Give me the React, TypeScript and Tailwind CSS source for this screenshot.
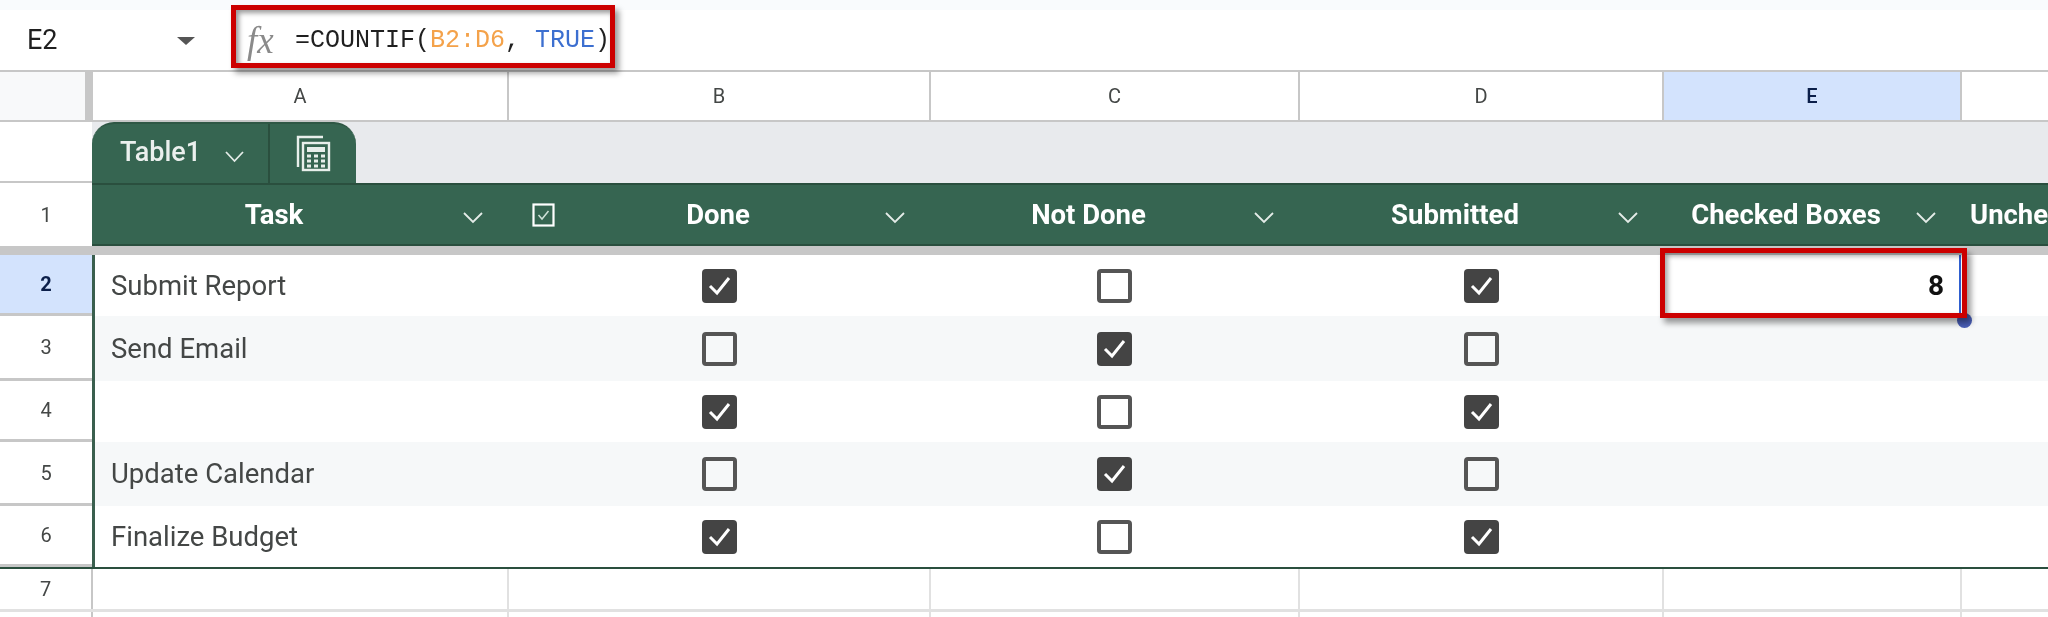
const widths = ["w-[416px]", "w-[422px]", "w-[369px]", "w-[364px]", "w-[298px]", "w-[87px]"];

function Chevron() {
  return (
    <svg width="22" height="13" viewBox="0 0 22 13" className="ml-[6px] mr-[24px] shrink-0 mt-[5px]" fill="none" stroke="#e4ece8" strokeWidth="1.8">
      <path d="M2 2 L11 11 L20 2" />
    </svg>
  );
}

function Checkbox({ on }: { on: boolean }) {
  return on ? (
    <div className="w-[35px] h-[34px] rounded-[4px] bg-[#444444] flex items-center justify-center">
      <svg width="27" height="24" viewBox="0 0 27 24" fill="none" stroke="#ffffff" strokeWidth="3">
        <path d="M4 12 L11 19 L23 4" />
      </svg>
    </div>
  ) : (
    <div className="w-[35px] h-[34px] rounded-[4px] border-[4px] border-[#555555]" />
  );
}

function HeaderCell({ label, width, pad, check }: { label: string; width: string; pad?: string; check?: boolean }) {
  return (
    <div className={`${width} shrink-0 h-full flex items-center relative overflow-hidden`}>
      {check && (
        <svg width="23" height="24" viewBox="0 0 23 24" className="absolute left-[24px] top-[18px]" fill="none" stroke="#ffffff">
          <rect x="1.5" y="1.5" width="20" height="21" strokeWidth="2.2" />
          <path d="M6.5 12 L10 16 L16.5 8" strokeWidth="1.5" stroke="#cfe0d8" />
        </svg>
      )}
      <span className={`${pad ?? ""} flex-1 text-center text-white font-bold text-[27.5px] leading-none whitespace-nowrap`}>{label}</span>
      <Chevron />
    </div>
  );
}

function ColHeader({ label, width, active }: { label: string; width: string; active?: boolean }) {
  return (
    <div className={`${width} shrink-0 h-full flex items-center justify-center border-r-2 border-[#c7c7c7] text-[20px] ${active ? "bg-[#d3e3fd] text-[#0b1f4a] font-medium" : "text-[#444746]"}`}>
      {label}
    </div>
  );
}

const rows = [
  { n: 2, task: "Submit Report", h: "h-[61px]", b: [true, false, true], stripe: false },
  { n: 3, task: "Send Email", h: "h-[65px]", b: [false, true, false], stripe: true },
  { n: 4, task: "", h: "h-[61px]", b: [true, false, true], stripe: false },
  { n: 5, task: "Update Calendar", h: "h-[64px]", b: [false, true, false], stripe: true },
  { n: 6, task: "Finalize Budget", h: "h-[61px]", b: [true, false, true], stripe: false },
];

export default function App() {
  return (
    <div className="relative w-[2048px] h-[617px] overflow-hidden bg-white font-['Roboto',sans-serif] text-[#444746] blur-[0.5px]">
      <div className="h-[10px] bg-[#f9fbfd]" />

      {/* Formula bar */}
      <div className="h-[62px] flex items-center border-b-2 border-[#c7c7c7]">
        <span className="w-[150px] pl-[27px] text-[27px] text-[#1f1f1f] leading-none">E2</span>
        <svg width="18" height="8" viewBox="0 0 18 8" className="ml-[27px] mt-[2px]">
          <path d="M0 0 H18 L9 8 Z" fill="#555555" />
        </svg>
        <span className="ml-[52px] w-[48px] font-['Liberation_Serif',serif] italic text-[37px] leading-none text-[#8a8a8a]">fx</span>
        <span className="font-['Liberation_Mono',monospace] text-[25px] leading-none text-[#1f1f1f]">
          =COUNTIF(<span className="text-[#f4a24a]">B2:D6</span>, <span className="text-[#3c6fd0]">TRUE</span>)
        </span>
      </div>

      {/* Column letters */}
      <div className="h-[50px] flex border-b-2 border-[#c7c7c7]">
        <div className="w-[85px] shrink-0 bg-[#f8f9fa]" />
        <div className="w-[8px] shrink-0 bg-[#c7c7c7]" />
        <ColHeader label="A" width={widths[0]} />
        <ColHeader label="B" width={widths[1]} />
        <ColHeader label="C" width={widths[2]} />
        <ColHeader label="D" width={widths[3]} />
        <ColHeader label="E" width={widths[4]} active />
        <div className="flex-1" />
      </div>

      {/* Table tab band */}
      <div className="h-[61px] flex">
        <div className="w-[92px] shrink-0 border-b-2 border-[#c7c7c7]" />
        <div className="flex-1 flex bg-[#e8eaed]">
          <div className="w-[264px] h-full flex items-stretch bg-[#366551] rounded-t-[22px] border-t-2 border-[#2f5745]">
            <div className="w-[178px] flex items-center border-r-2 border-[#2a4f3e]">
              <span className="ml-[28px] mb-[2px] text-white/90 font-medium text-[27px] leading-none">Table1</span>
              <svg width="21" height="13" viewBox="0 0 21 13" className="ml-[23px] mt-[5px]" fill="none" stroke="#e4ece8" strokeWidth="1.8">
                <path d="M2 2 L10.5 11 L19 2" />
              </svg>
            </div>
            <div className="flex-1 flex items-center justify-center">
              <svg width="35" height="37" viewBox="0 0 35 37" fill="none" stroke="#e8efeb" strokeWidth="2.4">
                <path d="M2 32 V2 H27" />
                <rect x="7" y="8" width="26" height="27" />
                <rect x="11" y="12" width="18" height="5" fill="#e8efeb" stroke="none" />
                <path d="M11 21 h4 M18 21 h4 M25 21 h4 M11 26 h4 M18 26 h4 M25 26 h4 M11 31 h4 M18 31 h4 M25 31 h4" strokeWidth="3" />
              </svg>
            </div>
          </div>
        </div>
      </div>

      {/* Row 1: table header */}
      <div className="h-[63px] flex">
        <div className="w-[92px] shrink-0 flex items-center justify-center text-[20px]">1</div>
        <div className="flex-1 flex bg-[#366551] border-t-2 border-b-2 border-[#2a4f3e] overflow-hidden">
          <HeaderCell label="Task" width={widths[0]} />
          <HeaderCell label="Done" width={widths[1]} pad="pl-[50px]" check />
          <HeaderCell label="Not Done" width={widths[2]} />
          <HeaderCell label="Submitted" width={widths[3]} />
          <HeaderCell label="Checked Boxes" width={widths[4]} />
          <div className={`${widths[5]} shrink-0 flex items-center pl-[9px] text-white font-bold text-[27.5px] leading-none whitespace-nowrap`}>Unchecked Boxes</div>
        </div>
      </div>

      {/* Frozen divider */}
      <div className="h-[9px] bg-[#c7c7c7]" />

      {/* Data rows */}
      {rows.map((r, i) => (
        <div key={r.n} className={`${r.h} flex`}>
          <div className={`w-[92px] shrink-0 flex items-center justify-center text-[20px] border-b-[3px] border-[#c7c7c7] ${i === 0 ? "bg-[#d3e3fd] text-[#0b1f4a] font-bold" : ""}`}>
            {r.n}
          </div>
          <div className={`flex-1 flex ${r.stripe ? "bg-[#f6f8f9]" : "bg-white"}`}>
            <div className={`${widths[0]} shrink-0 flex items-center pl-[16px] border-l-[3px] border-[#3a5f4e] text-[27.5px] leading-none`}>{r.task}</div>
            {r.b.map((on, j) => (
              <div key={j} className={`${widths[j + 1]} shrink-0 flex items-center justify-center`}>
                <Checkbox on={on} />
              </div>
            ))}
            <div className={`${widths[4]} shrink-0 flex items-center justify-end pr-[15px] text-[28px] font-bold text-[#111111] leading-none ${i === 0 ? "border-x-2 border-[#2f5fd0]" : ""}`}>
              {i === 0 ? "8" : ""}
            </div>
          </div>
        </div>
      ))}

      {/* Row 7 */}
      <div className="h-[45px] flex border-t-2 border-b-[3px] border-t-[#2a4f3e] border-b-[#e1e1e1]">
        <div className="w-[93px] shrink-0 flex items-center justify-center text-[20px] border-r-2 border-[#c7c7c7]">7</div>
        <div className={`${widths[0]} shrink-0 border-r-2 border-[#e1e1e1]`} />
        <div className={`${widths[1]} shrink-0 border-r-2 border-[#e1e1e1]`} />
        <div className={`${widths[2]} shrink-0 border-r-2 border-[#e1e1e1]`} />
        <div className={`${widths[3]} shrink-0 border-r-2 border-[#e1e1e1]`} />
        <div className={`${widths[4]} shrink-0 border-r-2 border-[#e1e1e1]`} />
      </div>
      <div className="h-[5px] flex">
        <div className="w-[93px] shrink-0 border-r-2 border-[#c7c7c7]" />
        <div className={`${widths[0]} shrink-0 border-r-2 border-[#e1e1e1]`} />
        <div className={`${widths[1]} shrink-0 border-r-2 border-[#e1e1e1]`} />
        <div className={`${widths[2]} shrink-0 border-r-2 border-[#e1e1e1]`} />
        <div className={`${widths[3]} shrink-0 border-r-2 border-[#e1e1e1]`} />
        <div className={`${widths[4]} shrink-0 border-r-2 border-[#e1e1e1]`} />
      </div>

      {/* Selection handle */}
      <div className="absolute left-[1957px] top-[313px] w-[15px] h-[15px] rounded-full bg-[#4a5fb8]" />

      {/* Annotation boxes */}
      <div className="absolute left-[231px] top-[5px] w-[384px] h-[63px] border-[5px] border-[#cc0000] shadow-[4px_5px_6px_rgba(0,0,0,0.4),inset_3px_3px_5px_rgba(0,0,0,0.4)]" />
      <div className="absolute left-[1660px] top-[248px] w-[307px] h-[70px] border-[5px] border-[#cc0000] shadow-[4px_5px_6px_rgba(0,0,0,0.4),inset_3px_3px_5px_rgba(0,0,0,0.35)]" />
    </div>
  );
}
